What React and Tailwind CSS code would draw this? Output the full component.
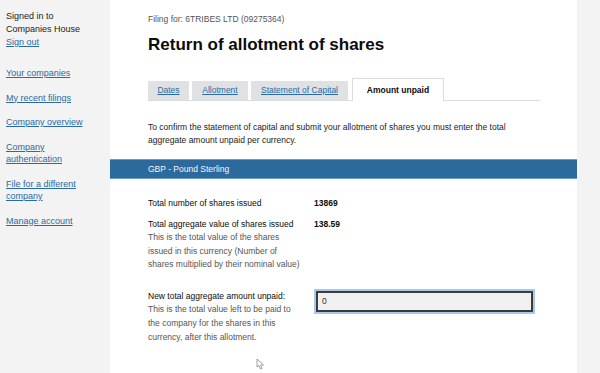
import React from "react";

const font = { fontFamily: '"Liberation Sans", Arial, sans-serif' };

function SideLink({ children }) {
  return (
    <a className="block text-[#2a6aa5] underline underline-offset-1 leading-[12.5px]" href="#">
      {children}
    </a>
  );
}

function Tab({ children, w }) {
  return (
    <div className={"h-[19px] mr-[3px] bg-[#dfe1e3] flex items-center justify-center " + w}>
      <a className="text-[#2a6aa5] underline text-[8.5px]" href="#">{children}</a>
    </div>
  );
}

export default function App() {
  return (
    <div className="relative flex w-[600px] h-[373px] overflow-hidden text-[#0b0c0c]" style={font}>
      <div className="w-[110px] shrink-0 bg-[#f3f3f3] pl-[6px] pt-[10px] text-[9px]">
        <div className="leading-[13px] text-[#222]">Signed in to</div>
        <div className="leading-[13px] text-[#222]">Companies House</div>
        <a className="block text-[#2a6aa5] underline underline-offset-1 leading-[13px]" href="#">Sign out</a>
        <div className="mt-[18px] flex flex-col gap-[12px]">
          <SideLink>Your companies</SideLink>
          <SideLink>My recent filings</SideLink>
          <SideLink>Company overview</SideLink>
          <SideLink>Company<br />authentication</SideLink>
          <SideLink>File for a different<br />company</SideLink>
          <SideLink>Manage account</SideLink>
        </div>
      </div>
      <div className="w-[467px] shrink-0 bg-white">
        <div className="pl-[38px] pt-[13px]">
          <div className="text-[8.5px] leading-[12px] text-[#555]">Filing for: 6TRIBES LTD (09275364)</div>
          <h1 className="mt-[10px] text-[17px] font-bold leading-[20px]">Return of allotment of shares</h1>
          <div className="mt-[23px] w-[392px] flex items-end border-b border-[#dcdcdc]">
            <Tab w="w-[41px]">Dates</Tab>
            <Tab w="w-[56px]">Allotment</Tab>
            <Tab w="w-[97px]">Statement of Capital</Tab>
            <div className="h-[23px] w-[92px] -mb-px ml-[1px] border border-b-0 border-[#dcdcdc] bg-white flex items-center justify-center text-[8.5px] font-bold">
              Amount unpaid
            </div>
          </div>
          <p className="mt-[20px] text-[8.5px] leading-[13px] text-[#222] w-[380px]">
            To confirm the statement of capital and submit your allotment of shares you must enter the total aggregate amount unpaid per currency.
          </p>
        </div>
        <div className="mt-[12px] h-[20px] bg-[#2c699d] border-y border-[#6b9bc6] pl-[38px] flex items-center text-[#f4f7fa] text-[8.5px]">
          GBP - Pound Sterling
        </div>
        <div className="pl-[38px] text-[8.5px]">
          <div className="mt-[18px] flex">
            <div className="w-[166px] leading-[13px]">Total number of shares issued</div>
            <div className="font-bold leading-[13px]">13869</div>
          </div>
          <div className="mt-[8px] flex">
            <div className="w-[166px]">
              <div className="leading-[13px]">Total aggregate value of shares issued</div>
              <div className="leading-[13.7px] text-[#555] whitespace-nowrap">
                This is the total value of the shares<br />
                issued in this currency (Number of<br />
                shares multiplied by their nominal value)
              </div>
            </div>
            <div className="font-bold leading-[13px]">138.59</div>
          </div>
          <div className="mt-[18px] flex">
            <div className="w-[168px]">
              <div className="leading-[13px]">New total aggregate amount unpaid:</div>
              <div className="leading-[13.7px] text-[#555] whitespace-nowrap">
                This is the total value left to be paid to<br />
                the company for the shares in this<br />
                currency, after this allotment.
              </div>
            </div>
            <div className="mt-[1px] w-[217px] h-[21px] border-2 border-[#3b3b3b] bg-[#f0f0f0] outline outline-2 outline-[#a9c8ec] flex items-center pl-[4px] text-[8.5px] text-[#333]">
              0
            </div>
          </div>
        </div>
      </div>
      <div className="flex-1 bg-[#f3f3f3]" />
      <svg className="absolute left-[256px] top-[358px]" width="9" height="12" viewBox="0 0 9 12">
        <path d="M1 1 L1 9 L3 7.5 L4.5 11 L6 10.3 L4.6 7 L7.5 7 Z" fill="white" stroke="#888" strokeWidth="0.8" />
      </svg>
    </div>
  );
}
